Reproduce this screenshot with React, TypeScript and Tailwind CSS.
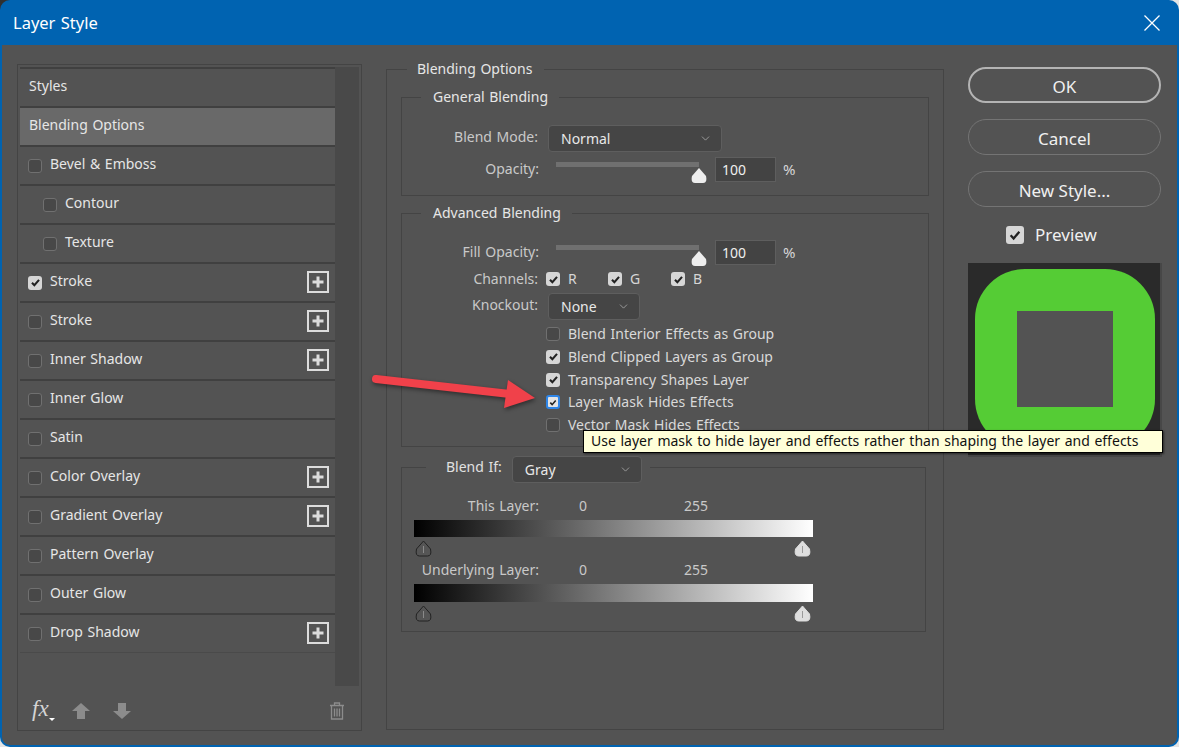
import { ChevronDown } from "lucide-react";

function Check() {
  return (
    <svg viewBox="0 0 14 14" className="w-[13px] h-[13px]">
      <path d="M3.2 7.2 L5.8 10 L10.8 4.2" fill="none" stroke="#222222" strokeWidth="2.2" />
    </svg>
  );
}

function Box({ on, focus }: { on?: boolean; focus?: boolean }) {
  if (focus)
    return (
      <span className="w-[14px] h-[14px] shrink-0 rounded-[3px] bg-[#e4e4e4] border-2 border-[#2f86e8] flex items-center justify-center">
        <Check />
      </span>
    );
  if (on)
    return (
      <span className="w-[14px] h-[14px] shrink-0 rounded-[3px] bg-[#d6d6d6] flex items-center justify-center">
        <Check />
      </span>
    );
  return <span className="block w-[14px] h-[14px] shrink-0 rounded-[3px] bg-[#484848] border border-[#707070]" />;
}

function Plus() {
  return (
    <span className="w-[22px] h-[22px] border-2 border-[#dcdcdc] flex items-center justify-center">
      <svg viewBox="0 0 14 14" className="w-[14px] h-[14px]">
        <path d="M7 1.5V12.5M1.5 7H12.5" stroke="#dcdcdc" strokeWidth="3" />
      </svg>
    </span>
  );
}

const rows: { t: string; box?: boolean; on?: boolean; sub?: boolean; plus?: boolean; sel?: boolean }[] = [
  { t: "Styles" },
  { t: "Blending Options", sel: true },
  { t: "Bevel & Emboss", box: true },
  { t: "Contour", box: true, sub: true },
  { t: "Texture", box: true, sub: true },
  { t: "Stroke", box: true, on: true, plus: true },
  { t: "Stroke", box: true, plus: true },
  { t: "Inner Shadow", box: true, plus: true },
  { t: "Inner Glow", box: true },
  { t: "Satin", box: true },
  { t: "Color Overlay", box: true, plus: true },
  { t: "Gradient Overlay", box: true, plus: true },
  { t: "Pattern Overlay", box: true },
  { t: "Outer Glow", box: true },
  { t: "Drop Shadow", box: true, plus: true },
];

function Select({ label, w }: { label: string; w: string }) {
  return (
    <div className={`${w} h-[27px] shrink-0 rounded-[4px] bg-[#454545] border border-[#5e5e5e] flex items-center justify-between pl-[12px] pr-[9px] text-[#e8e8e8]`}>
      <span>{label}</span>
      <ChevronDown size={13} strokeWidth={1.2} color="#c4c4c4" />
    </div>
  );
}

function Pointer({ dark }: { dark?: boolean }) {
  return (
    <svg viewBox="0 0 17 17" className="w-[17px] h-[17px] block">
      {dark ? (
        <>
          <path d="M8.5 1 L15.5 9 Q17 16 12.5 16 H4.5 Q0 16 1.5 9 Z" fill="#555555" stroke="#222222" strokeWidth="1" />
          <path d="M8.5 6V13" stroke="#8a8a8a" strokeWidth="1" />
        </>
      ) : (
        <>
          <path d="M8.5 1 L15.5 9 Q17 16 12.5 16 H4.5 Q0 16 1.5 9 Z" fill="#dedede" stroke="#dedede" strokeWidth="1" />
          <path d="M8.5 6V13" stroke="#9a9a9a" strokeWidth="1" />
        </>
      )}
    </svg>
  );
}

function SliderRow({ label }: { label: string }) {
  return (
    <div className="flex h-[25px] items-center">
      <span className="w-[137px] text-right text-[#c9c9c9] -mt-[2px]">{label}</span>
      <div className="relative ml-[17px] w-[143px] h-[25px] shrink-0">
        <div className="mt-[5px] h-[5px] bg-[#707070]" />
        <svg viewBox="0 0 16 15" className="absolute left-[135px] top-[11px] w-[16px] h-[15px]">
          <path d="M8 0 L15 8 Q16.5 15 12 15 H4 Q-0.5 15 1 8 Z" fill="#eeeeee" />
        </svg>
      </div>
      <div className="ml-[16px] w-[61px] h-[25px] bg-[#434343] border border-[#5e5e5e] pl-[6px] flex items-center text-[#efefef]">100</div>
      <span className="ml-[7px] text-[15px] text-[#d6d6d6] -mt-[2px]">%</span>
    </div>
  );
}

function Channel({ c, w }: { c: string; w: string }) {
  return (
    <div className={`${w} flex items-center gap-[8px]`}>
      <Box on />
      <span className="text-[#d6d6d6]">{c}</span>
    </div>
  );
}

function Opt({ t, on, focus, h }: { t: string; on?: boolean; focus?: boolean; h?: string }) {
  return (
    <div className={`${h ?? "h-[23px]"} flex items-center gap-[8px] pl-[144px] text-[#d9d9d9]`}>
      <Box on={on} focus={focus} />
      <span>{t}</span>
    </div>
  );
}

function Ramp({ label, h }: { label: string; h: string }) {
  return (
    <>
      <div className="flex h-[18px] items-center text-[#c9c9c9]">
        <span className="w-[137px] text-right">{label}</span>
        <span className="ml-[40px] w-[105px]">0</span>
        <span>255</span>
      </div>
      <div className={`ml-[12px] mt-[5px] w-[399px] ${h} bg-linear-to-r/srgb from-black to-white`} />
      <div className="ml-[12px] mt-[3px] w-[399px] h-[17px] flex justify-between pl-[1px] pr-[2px]">
        <Pointer dark />
        <Pointer />
      </div>
    </>
  );
}

export default function App() {
  return (
    <div className="w-[1179px] h-[747px] bg-[linear-gradient(135deg,#303030_2%,#e4e4e4_2%)] overflow-hidden text-[14px] leading-[20px] [word-spacing:1px] [font-family:'Noto_Sans',sans-serif]">
      <div className="relative h-full rounded-[10px] bg-[#0063b1] p-[2px] pt-0 flex flex-col">
        <div className="h-[45px] shrink-0 flex items-center justify-between pl-[11px] pr-[17px] text-[16.5px] text-white">
          <span>Layer Style</span>
          <svg viewBox="0 0 16 16" className="w-[16px] h-[16px]">
            <path d="M0.5 0.5L15.5 15.5M15.5 0.5L0.5 15.5" stroke="white" strokeWidth="1.3" />
          </svg>
        </div>
        <div className="flex-1 min-h-0 bg-[#535353] rounded-b-[8px] flex">
          {/* Left list */}
          <div className="ml-[15px] mt-[19px] w-[345px] h-[667px] border border-[#444444] flex flex-col">
            <div className="flex h-[621px] shrink-0 pl-[2px] pt-[2px]">
              <div className="w-[315px]">
                {rows.map((r, i) => (
                  <div
                    key={i}
                    className={`h-[39px] border-t-2 border-[#404040] flex items-center ${r.sel ? "bg-[#696969]" : ""} ${r.sub ? "pl-[23px]" : r.box ? "pl-[8px]" : "pl-[9px]"} pr-[6px] text-[#e6e6e6]`}
                  >
                    {r.box && <span className="mr-[8px] flex"><Box on={r.on} /></span>}
                    <span className="flex-1 -mt-[3px]">{r.t}</span>
                    {r.plus && <span className="-mt-[2px]"><Plus /></span>}
                  </div>
                ))}
                <div className="border-t border-[#4a4a4a]" />
              </div>
              <div className="w-[24px] bg-[#494949]" />
            </div>
            <div className="flex-1 flex items-center pl-[14px] pr-[16px] pt-[5px] gap-[23px]">
              <span className="relative w-[17px] -mt-[3px] text-[#d4d4d4] text-[23px] italic [font-family:'Liberation_Serif',serif]">
                fx
                <span className="absolute left-[17px] bottom-[-2px] w-0 h-0 border-x-[3px] border-t-[3px] border-x-transparent border-t-white" />
              </span>
              <svg viewBox="0 0 18 16" className="w-[18px] h-[16px]">
                <path d="M9 0L18 8H13V16H5V8H0Z" fill="#8c8c8c" />
              </svg>
              <svg viewBox="0 0 18 16" className="w-[18px] h-[16px]">
                <path d="M5 0H13V8H18L9 16L0 8H5Z" fill="#8c8c8c" />
              </svg>
              <svg viewBox="0 0 16 18" className="ml-auto w-[16px] h-[18px]">
                <path d="M1 3.5H15M5.5 3V1H10.5V3M2.5 3.5V17H13.5V3.5M5.5 6.5V14.5M8 6.5V14.5M10.5 6.5V14.5" fill="none" stroke="#8c8c8c" strokeWidth="1.3" />
              </svg>
            </div>
          </div>

          {/* Middle */}
          <div className="ml-[24px] mt-[14px] w-[558px] h-[671px] shrink-0">
            <fieldset className="h-full border border-[#444444]">
              <legend className="ml-[20px] h-[20px] pl-[10px] pr-[12px] text-[#e6e6e6]">Blending Options</legend>
              <fieldset className="mt-[8px] ml-[14px] w-[528px] border border-[#444444] pt-[18px] pb-[13px]">
                <legend className="ml-[19px] h-[20px] pl-[12px] pr-[11px] text-[#e6e6e6] -mt-[1px]">General Blending</legend>
                <div className="flex items-center">
                  <span className="w-[136px] text-right text-[#c9c9c9] -mt-[4px]">Blend Mode:</span>
                  <span className="w-[10px]" />
                  <Select label="Normal" w="w-[174px]" />
                </div>
                <div className="mt-[5px]">
                  <SliderRow label="Opacity:" />
                </div>
              </fieldset>
              <fieldset className="mt-[7px] ml-[14px] w-[528px] border border-[#444444] pt-[17px] pb-[9px]">
                <legend className="ml-[19px] h-[20px] pl-[12px] pr-[11px] text-[#e6e6e6]">Advanced Blending</legend>
                <SliderRow label="Fill Opacity:" />
                <div className="mt-[5px] h-[18px] flex items-center">
                  <span className="w-[136px] text-right text-[#c9c9c9]">Channels:</span>
                  <span className="w-[8px]" />
                  <Channel c="R" w="w-[62px]" />
                  <Channel c="G" w="w-[63px]" />
                  <Channel c="B" w="w-[40px]" />
                </div>
                <div className="mt-[5px] flex items-center">
                  <span className="w-[136px] text-right text-[#c9c9c9] -mt-[3px]">Knockout:</span>
                  <span className="w-[10px]" />
                  <Select label="None" w="w-[92px]" />
                </div>
                <div className="mt-[2px] pb-[1px]">
                  <Opt t="Blend Interior Effects as Group" />
                  <Opt t="Blend Clipped Layers as Group" on />
                  <Opt t="Transparency Shapes Layer" on />
                  <Opt t="Layer Mask Hides Effects" on focus h="h-[22px]" />
                  <Opt t="Vector Mask Hides Effects" />
                </div>
              </fieldset>
              <fieldset className="mt-[9px] ml-[14px] w-[525px] border border-[#444444] pt-[19px] pb-[9px]">
                <legend className="ml-[24px] h-[22px] pl-[20px] pr-[8px] flex items-start gap-[10px]">
                  <span className="text-[#e0e0e0] mt-[1px]">Blend If:</span>
                  <Select label="Gray" w="w-[130px]" />
                </legend>
                <Ramp label="This Layer:" h="h-[17px]" />
                <div className="mt-[4px]">
                  <Ramp label="Underlying Layer:" h="h-[18px]" />
                </div>
              </fieldset>
            </fieldset>
          </div>

          {/* Right */}
          <div className="ml-[24px] mt-[22px] w-[194px] shrink-0 flex flex-col text-[#f0f0f0] text-[17px]">
            <button className="mr-[1px] h-[36px] pt-[4px] rounded-full border-2 border-[#b4b4b4]">OK</button>
            <button className="mr-[1px] mt-[16px] h-[36px] pt-[4px] rounded-full border border-[#747474]">Cancel</button>
            <button className="mr-[1px] mt-[16px] h-[36px] pt-[4px] rounded-full border border-[#747474]">New Style...</button>
            <div className="mt-[19px] h-[18px] flex items-center justify-center gap-[11px] pr-[27px]">
              <span className="w-[18px] h-[18px] rounded-[3px] bg-[#d6d6d6] flex items-center justify-center">
                <svg viewBox="0 0 14 14" className="w-[16px] h-[16px]">
                  <path d="M3.2 7.2 L5.8 10 L10.8 4.2" fill="none" stroke="#222222" strokeWidth="2" />
                </svg>
              </span>
              <span>Preview</span>
            </div>
            <div className="mt-[19px] h-[194px] bg-[#2a2a2a] border-r-2 border-b-2 border-[#474747] pt-[6px] pl-[7px]">
              <div className="w-[180px] h-[180px] rounded-[50px] bg-[#55cc35] flex items-center justify-center">
                <div className="w-[96px] h-[96px] bg-[#535353]" />
              </div>
            </div>
          </div>
        </div>

        {/* Arrow annotation */}
        <svg viewBox="0 0 180 45" className="absolute left-[360px] top-[370px] w-[180px] h-[45px] drop-shadow-[1px_2px_2px_rgba(0,0,0,0.45)]">
          <path d="M16 9 L150 24" stroke="#f0414a" strokeWidth="8" strokeLinecap="round" fill="none" />
          <path d="M148 10 L175 28 L144 38 Z" fill="#f0414a" />
        </svg>

        {/* Tooltip */}
        <div className="absolute left-[583px] top-[430px] w-[580px] h-[23px] bg-[#ffffd9] border border-black pl-[7px] pb-[2px] flex items-center text-[14px] text-[#111111] shadow-[1px_1px_2px_rgba(0,0,0,0.5)]">
          Use layer mask to hide layer and effects rather than shaping the layer and effects
        </div>
      </div>
    </div>
  );
}
